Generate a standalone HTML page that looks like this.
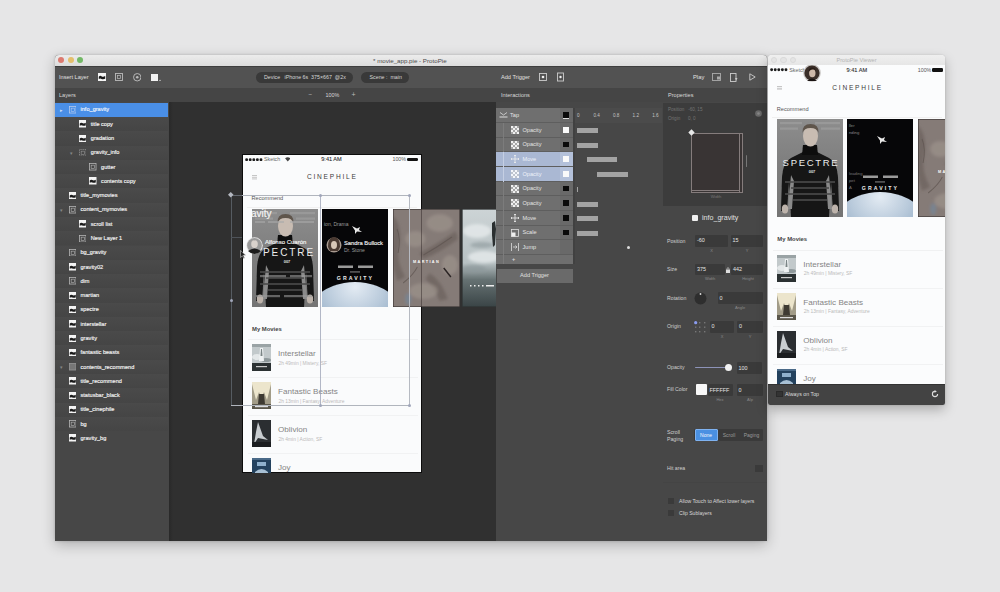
<!DOCTYPE html><html><head><meta charset="utf-8"><style>
*{margin:0;padding:0;box-sizing:border-box}
html,body{width:1000px;height:592px;overflow:hidden;background:#e6e6e7;font-family:"Liberation Sans",sans-serif;position:relative}
.a{position:absolute}
.t{position:absolute;white-space:nowrap}
svg{position:absolute;overflow:hidden}
</style></head><body>
<div class="a" style="left:55px;top:55px;width:712px;height:486px;background:#474747;box-shadow:0 4px 14px rgba(0,0,0,.24),0 0 3px rgba(0,0,0,.18);border-radius:4px 4px 2px 2px"></div>
<div class="a" style="left:55px;top:55px;width:712px;height:11px;background:linear-gradient(#ececec,#dcdcdc);border-radius:4px 4px 0 0"></div>
<div class="a" style="left:58.2px;top:57.4px;width:6px;height:6px;border-radius:50%;background:#dc7a70"></div>
<div class="a" style="left:67.7px;top:57.4px;width:6px;height:6px;border-radius:50%;background:#e4bf6c"></div>
<div class="a" style="left:77.2px;top:57.4px;width:6px;height:6px;border-radius:50%;background:#72b866"></div>
<div class="t" style="left:373px;top:57.28px;font-size:6.2px;line-height:7.44px;color:#4a4a4a;">* movie_app.pie - ProtoPie</div>
<div class="a" style="left:55px;top:66px;width:712px;height:22px;background:#525252"></div>
<div class="a" style="left:55px;top:66px;width:712px;height:1px;background:#3e3e3e"></div>
<div class="a" style="left:55px;top:88px;width:712px;height:14px;background:#454545"></div>
<div class="a" style="left:55px;top:102px;width:114px;height:439px;background:#474747"></div>
<div class="a" style="left:55px;top:102.7px;width:113px;height:14.28px;background:#4a8fe7"></div>
<div class="t" style="left:60.0px;top:106.84px;font-size:5px;line-height:6px;color:#cfe0f8">&#9656;</div>
<svg style="left:68.5px;top:106.04px" width="7.5" height="7.5" viewBox="0 0 8 8"><rect x="0.5" y="0.5" width="7" height="7" fill="none" stroke="#b9cdf0" stroke-width="0.8"/><rect x="2.3" y="2.3" width="3.4" height="3.4" fill="none" stroke="#b9cdf0" stroke-width="0.6"/></svg>
<div class="t" style="left:80.5px;top:106.48px;font-size:5.6px;line-height:6.72px;color:#eef3fb;-webkit-text-stroke:0.16px #eef3fb;">info_gravity</div>
<div class="a" style="left:55px;top:116.98px;width:113px;height:14.28px;background:linear-gradient(#4a4a4a,#454545)"></div>
<svg style="left:78.8px;top:120.32000000000001px" width="7.5" height="7.5" viewBox="0 0 8 8"><rect x="0" y="0" width="8" height="8" fill="#f4f4f4"/><path d="M0.8 3.8 Q2 2.2 3.5 3.2 Q5 4.3 7.2 3 L7.2 5.8 Q5 6.6 3.5 5.9 Q2 5.2 0.8 6.1Z" fill="#1a1a1a"/></svg>
<div class="t" style="left:90.8px;top:120.76px;font-size:5.6px;line-height:6.72px;color:#f2f2f2;-webkit-text-stroke:0.16px #f2f2f2;">title copy</div>
<div class="a" style="left:55px;top:131.26px;width:113px;height:14.28px;background:linear-gradient(#4a4a4a,#454545)"></div>
<svg style="left:78.8px;top:134.59999999999997px" width="7.5" height="7.5" viewBox="0 0 8 8"><rect x="0" y="0" width="8" height="8" fill="#f4f4f4"/><path d="M0.8 3.8 Q2 2.2 3.5 3.2 Q5 4.3 7.2 3 L7.2 5.8 Q5 6.6 3.5 5.9 Q2 5.2 0.8 6.1Z" fill="#1a1a1a"/></svg>
<div class="t" style="left:90.8px;top:135.04px;font-size:5.6px;line-height:6.72px;color:#f2f2f2;-webkit-text-stroke:0.16px #f2f2f2;">gradation</div>
<div class="a" style="left:55px;top:145.54px;width:113px;height:14.28px;background:linear-gradient(#4a4a4a,#454545)"></div>
<div class="t" style="left:70.3px;top:149.67999999999998px;font-size:5px;line-height:6px;color:#888">&#9662;</div>
<svg style="left:78.8px;top:148.87999999999997px" width="7.5" height="7.5" viewBox="0 0 8 8"><rect x="0.5" y="0.5" width="7" height="7" fill="none" stroke="#999" stroke-width="0.8" stroke-dasharray="1.2 0.8"/><rect x="2.3" y="2.3" width="3.4" height="3.4" fill="none" stroke="#999" stroke-width="0.6"/></svg>
<div class="t" style="left:90.8px;top:149.32px;font-size:5.6px;line-height:6.72px;color:#f2f2f2;-webkit-text-stroke:0.16px #f2f2f2;">gravity_info</div>
<div class="a" style="left:55px;top:159.82px;width:113px;height:14.28px;background:linear-gradient(#4a4a4a,#454545)"></div>
<svg style="left:89.1px;top:163.15999999999997px" width="7.5" height="7.5" viewBox="0 0 8 8"><rect x="0.5" y="0.5" width="7" height="7" fill="none" stroke="#bbb" stroke-width="0.8"/><rect x="2.3" y="2.3" width="3.4" height="3.4" fill="none" stroke="#bbb" stroke-width="0.6"/></svg>
<div class="t" style="left:101.1px;top:163.60px;font-size:5.6px;line-height:6.72px;color:#f2f2f2;-webkit-text-stroke:0.16px #f2f2f2;">gutter</div>
<div class="a" style="left:55px;top:174.1px;width:113px;height:14.28px;background:linear-gradient(#4a4a4a,#454545)"></div>
<svg style="left:89.1px;top:177.43999999999997px" width="7.5" height="7.5" viewBox="0 0 8 8"><rect x="0" y="0" width="8" height="8" fill="#f4f4f4"/><path d="M0.8 3.8 Q2 2.2 3.5 3.2 Q5 4.3 7.2 3 L7.2 5.8 Q5 6.6 3.5 5.9 Q2 5.2 0.8 6.1Z" fill="#1a1a1a"/></svg>
<div class="t" style="left:101.1px;top:177.88px;font-size:5.6px;line-height:6.72px;color:#f2f2f2;-webkit-text-stroke:0.16px #f2f2f2;">contents copy</div>
<div class="a" style="left:55px;top:188.38px;width:113px;height:14.28px;background:linear-gradient(#4a4a4a,#454545)"></div>
<svg style="left:68.5px;top:191.71999999999997px" width="7.5" height="7.5" viewBox="0 0 8 8"><rect x="0" y="0" width="8" height="8" fill="#f4f4f4"/><path d="M0.8 3.8 Q2 2.2 3.5 3.2 Q5 4.3 7.2 3 L7.2 5.8 Q5 6.6 3.5 5.9 Q2 5.2 0.8 6.1Z" fill="#1a1a1a"/></svg>
<div class="t" style="left:80.5px;top:192.16px;font-size:5.6px;line-height:6.72px;color:#f2f2f2;-webkit-text-stroke:0.16px #f2f2f2;">title_mymovies</div>
<div class="a" style="left:55px;top:202.66px;width:113px;height:14.28px;background:linear-gradient(#4a4a4a,#454545)"></div>
<div class="t" style="left:60.0px;top:206.79999999999998px;font-size:5px;line-height:6px;color:#888">&#9662;</div>
<svg style="left:68.5px;top:205.99999999999997px" width="7.5" height="7.5" viewBox="0 0 8 8"><rect x="0.5" y="0.5" width="7" height="7" fill="none" stroke="#bbb" stroke-width="0.8"/><rect x="2.3" y="2.3" width="3.4" height="3.4" fill="none" stroke="#bbb" stroke-width="0.6"/></svg>
<div class="t" style="left:80.5px;top:206.44px;font-size:5.6px;line-height:6.72px;color:#f2f2f2;-webkit-text-stroke:0.16px #f2f2f2;">content_mymovies</div>
<div class="a" style="left:55px;top:216.94px;width:113px;height:14.28px;background:linear-gradient(#4a4a4a,#454545)"></div>
<svg style="left:78.8px;top:220.27999999999997px" width="7.5" height="7.5" viewBox="0 0 8 8"><rect x="0" y="0" width="8" height="8" fill="#f4f4f4"/><path d="M0.8 3.8 Q2 2.2 3.5 3.2 Q5 4.3 7.2 3 L7.2 5.8 Q5 6.6 3.5 5.9 Q2 5.2 0.8 6.1Z" fill="#1a1a1a"/></svg>
<div class="t" style="left:90.8px;top:220.72px;font-size:5.6px;line-height:6.72px;color:#f2f2f2;-webkit-text-stroke:0.16px #f2f2f2;">scroll list</div>
<div class="a" style="left:55px;top:231.21999999999997px;width:113px;height:14.28px;background:linear-gradient(#4a4a4a,#454545)"></div>
<svg style="left:78.8px;top:234.55999999999995px" width="7.5" height="7.5" viewBox="0 0 8 8"><rect x="0.5" y="0.5" width="7" height="7" fill="none" stroke="#bbb" stroke-width="0.8"/><rect x="2.3" y="2.3" width="3.4" height="3.4" fill="none" stroke="#bbb" stroke-width="0.6"/></svg>
<div class="t" style="left:90.8px;top:235.00px;font-size:5.6px;line-height:6.72px;color:#f2f2f2;-webkit-text-stroke:0.16px #f2f2f2;">New Layer 1</div>
<div class="a" style="left:55px;top:245.5px;width:113px;height:14.28px;background:linear-gradient(#4a4a4a,#454545)"></div>
<svg style="left:68.5px;top:248.83999999999997px" width="7.5" height="7.5" viewBox="0 0 8 8"><rect x="0.5" y="0.5" width="7" height="7" fill="none" stroke="#bbb" stroke-width="0.8"/><rect x="2.3" y="2.3" width="3.4" height="3.4" fill="none" stroke="#bbb" stroke-width="0.6"/></svg>
<div class="t" style="left:80.5px;top:249.28px;font-size:5.6px;line-height:6.72px;color:#f2f2f2;-webkit-text-stroke:0.16px #f2f2f2;">bg_gravity</div>
<div class="a" style="left:55px;top:259.78px;width:113px;height:14.28px;background:linear-gradient(#4a4a4a,#454545)"></div>
<svg style="left:68.5px;top:263.11999999999995px" width="7.5" height="7.5" viewBox="0 0 8 8"><rect x="0" y="0" width="8" height="8" fill="#f4f4f4"/><path d="M0.8 3.8 Q2 2.2 3.5 3.2 Q5 4.3 7.2 3 L7.2 5.8 Q5 6.6 3.5 5.9 Q2 5.2 0.8 6.1Z" fill="#1a1a1a"/></svg>
<div class="t" style="left:80.5px;top:263.56px;font-size:5.6px;line-height:6.72px;color:#f2f2f2;-webkit-text-stroke:0.16px #f2f2f2;">gravity02</div>
<div class="a" style="left:55px;top:274.06px;width:113px;height:14.28px;background:linear-gradient(#4a4a4a,#454545)"></div>
<svg style="left:68.5px;top:277.4px" width="7.5" height="7.5" viewBox="0 0 8 8"><rect x="0.5" y="0.5" width="7" height="7" fill="none" stroke="#bbb" stroke-width="0.8"/><rect x="2.3" y="2.3" width="3.4" height="3.4" fill="none" stroke="#bbb" stroke-width="0.6"/></svg>
<div class="t" style="left:80.5px;top:277.84px;font-size:5.6px;line-height:6.72px;color:#f2f2f2;-webkit-text-stroke:0.16px #f2f2f2;">dim</div>
<div class="a" style="left:55px;top:288.34px;width:113px;height:14.28px;background:linear-gradient(#4a4a4a,#454545)"></div>
<svg style="left:68.5px;top:291.67999999999995px" width="7.5" height="7.5" viewBox="0 0 8 8"><rect x="0" y="0" width="8" height="8" fill="#f4f4f4"/><path d="M0.8 3.8 Q2 2.2 3.5 3.2 Q5 4.3 7.2 3 L7.2 5.8 Q5 6.6 3.5 5.9 Q2 5.2 0.8 6.1Z" fill="#1a1a1a"/></svg>
<div class="t" style="left:80.5px;top:292.12px;font-size:5.6px;line-height:6.72px;color:#f2f2f2;-webkit-text-stroke:0.16px #f2f2f2;">martian</div>
<div class="a" style="left:55px;top:302.62px;width:113px;height:14.28px;background:linear-gradient(#4a4a4a,#454545)"></div>
<svg style="left:68.5px;top:305.96px" width="7.5" height="7.5" viewBox="0 0 8 8"><rect x="0" y="0" width="8" height="8" fill="#f4f4f4"/><path d="M0.8 3.8 Q2 2.2 3.5 3.2 Q5 4.3 7.2 3 L7.2 5.8 Q5 6.6 3.5 5.9 Q2 5.2 0.8 6.1Z" fill="#1a1a1a"/></svg>
<div class="t" style="left:80.5px;top:306.40px;font-size:5.6px;line-height:6.72px;color:#f2f2f2;-webkit-text-stroke:0.16px #f2f2f2;">spectre</div>
<div class="a" style="left:55px;top:316.9px;width:113px;height:14.28px;background:linear-gradient(#4a4a4a,#454545)"></div>
<svg style="left:68.5px;top:320.23999999999995px" width="7.5" height="7.5" viewBox="0 0 8 8"><rect x="0" y="0" width="8" height="8" fill="#f4f4f4"/><path d="M0.8 3.8 Q2 2.2 3.5 3.2 Q5 4.3 7.2 3 L7.2 5.8 Q5 6.6 3.5 5.9 Q2 5.2 0.8 6.1Z" fill="#1a1a1a"/></svg>
<div class="t" style="left:80.5px;top:320.68px;font-size:5.6px;line-height:6.72px;color:#f2f2f2;-webkit-text-stroke:0.16px #f2f2f2;">interstellar</div>
<div class="a" style="left:55px;top:331.18px;width:113px;height:14.28px;background:linear-gradient(#4a4a4a,#454545)"></div>
<svg style="left:68.5px;top:334.52px" width="7.5" height="7.5" viewBox="0 0 8 8"><rect x="0" y="0" width="8" height="8" fill="#f4f4f4"/><path d="M0.8 3.8 Q2 2.2 3.5 3.2 Q5 4.3 7.2 3 L7.2 5.8 Q5 6.6 3.5 5.9 Q2 5.2 0.8 6.1Z" fill="#1a1a1a"/></svg>
<div class="t" style="left:80.5px;top:334.96px;font-size:5.6px;line-height:6.72px;color:#f2f2f2;-webkit-text-stroke:0.16px #f2f2f2;">gravity</div>
<div class="a" style="left:55px;top:345.46px;width:113px;height:14.28px;background:linear-gradient(#4a4a4a,#454545)"></div>
<svg style="left:68.5px;top:348.79999999999995px" width="7.5" height="7.5" viewBox="0 0 8 8"><rect x="0" y="0" width="8" height="8" fill="#f4f4f4"/><path d="M0.8 3.8 Q2 2.2 3.5 3.2 Q5 4.3 7.2 3 L7.2 5.8 Q5 6.6 3.5 5.9 Q2 5.2 0.8 6.1Z" fill="#1a1a1a"/></svg>
<div class="t" style="left:80.5px;top:349.24px;font-size:5.6px;line-height:6.72px;color:#f2f2f2;-webkit-text-stroke:0.16px #f2f2f2;">fantastic beasts</div>
<div class="a" style="left:55px;top:359.73999999999995px;width:113px;height:14.28px;background:linear-gradient(#4a4a4a,#454545)"></div>
<div class="t" style="left:60.0px;top:363.87999999999994px;font-size:5px;line-height:6px;color:#888">&#9662;</div>
<svg style="left:68.5px;top:363.0799999999999px" width="7.5" height="7.5" viewBox="0 0 8 8"><rect x="0.5" y="0.5" width="7" height="7" fill="#777" stroke="#999" stroke-width="0.8"/></svg>
<div class="t" style="left:80.5px;top:363.52px;font-size:5.6px;line-height:6.72px;color:#f2f2f2;-webkit-text-stroke:0.16px #f2f2f2;">contents_recommend</div>
<div class="a" style="left:55px;top:374.02px;width:113px;height:14.28px;background:linear-gradient(#4a4a4a,#454545)"></div>
<svg style="left:68.5px;top:377.35999999999996px" width="7.5" height="7.5" viewBox="0 0 8 8"><rect x="0" y="0" width="8" height="8" fill="#f4f4f4"/><path d="M0.8 3.8 Q2 2.2 3.5 3.2 Q5 4.3 7.2 3 L7.2 5.8 Q5 6.6 3.5 5.9 Q2 5.2 0.8 6.1Z" fill="#1a1a1a"/></svg>
<div class="t" style="left:80.5px;top:377.80px;font-size:5.6px;line-height:6.72px;color:#f2f2f2;-webkit-text-stroke:0.16px #f2f2f2;">title_recommend</div>
<div class="a" style="left:55px;top:388.29999999999995px;width:113px;height:14.28px;background:linear-gradient(#4a4a4a,#454545)"></div>
<svg style="left:68.5px;top:391.63999999999993px" width="7.5" height="7.5" viewBox="0 0 8 8"><rect x="0" y="0" width="8" height="8" fill="#f4f4f4"/><path d="M0.8 3.8 Q2 2.2 3.5 3.2 Q5 4.3 7.2 3 L7.2 5.8 Q5 6.6 3.5 5.9 Q2 5.2 0.8 6.1Z" fill="#1a1a1a"/></svg>
<div class="t" style="left:80.5px;top:392.08px;font-size:5.6px;line-height:6.72px;color:#f2f2f2;-webkit-text-stroke:0.16px #f2f2f2;">statusbar_black</div>
<div class="a" style="left:55px;top:402.58px;width:113px;height:14.28px;background:linear-gradient(#4a4a4a,#454545)"></div>
<svg style="left:68.5px;top:405.91999999999996px" width="7.5" height="7.5" viewBox="0 0 8 8"><rect x="0" y="0" width="8" height="8" fill="#f4f4f4"/><path d="M0.8 3.8 Q2 2.2 3.5 3.2 Q5 4.3 7.2 3 L7.2 5.8 Q5 6.6 3.5 5.9 Q2 5.2 0.8 6.1Z" fill="#1a1a1a"/></svg>
<div class="t" style="left:80.5px;top:406.36px;font-size:5.6px;line-height:6.72px;color:#f2f2f2;-webkit-text-stroke:0.16px #f2f2f2;">title_cinephile</div>
<div class="a" style="left:55px;top:416.85999999999996px;width:113px;height:14.28px;background:linear-gradient(#4a4a4a,#454545)"></div>
<svg style="left:68.5px;top:420.19999999999993px" width="7.5" height="7.5" viewBox="0 0 8 8"><rect x="0.5" y="0.5" width="7" height="7" fill="none" stroke="#bbb" stroke-width="0.8"/><rect x="2.3" y="2.3" width="3.4" height="3.4" fill="none" stroke="#bbb" stroke-width="0.6"/></svg>
<div class="t" style="left:80.5px;top:420.64px;font-size:5.6px;line-height:6.72px;color:#f2f2f2;-webkit-text-stroke:0.16px #f2f2f2;">bg</div>
<svg style="left:68.5px;top:434.47999999999996px" width="7.5" height="7.5" viewBox="0 0 8 8"><rect x="0" y="0" width="8" height="8" fill="#f4f4f4"/><path d="M0.8 3.8 Q2 2.2 3.5 3.2 Q5 4.3 7.2 3 L7.2 5.8 Q5 6.6 3.5 5.9 Q2 5.2 0.8 6.1Z" fill="#1a1a1a"/></svg>
<div class="t" style="left:80.5px;top:434.92px;font-size:5.6px;line-height:6.72px;color:#f2f2f2;-webkit-text-stroke:0.16px #f2f2f2;">gravity_bg</div>
<div class="t" style="left:59px;top:73.84px;font-size:5.6px;line-height:6.72px;color:#e0e0e0;">Insert Layer</div>
<svg style="left:97.5px;top:73.3px" width="8" height="8" viewBox="0 0 8 8"><rect x="0" y="0" width="8" height="8" fill="#f4f4f4"/><path d="M0.8 3.8 Q2 2.2 3.5 3.2 Q5 4.3 7.2 3 L7.2 5.8 Q5 6.6 3.5 5.9 Q2 5.2 0.8 6.1Z" fill="#1a1a1a"/></svg>
<svg style="left:115px;top:73.3px" width="8" height="8" viewBox="0 0 8 8"><rect x="0.5" y="0.5" width="7" height="7" fill="none" stroke="#bbb" stroke-width="0.9"/><rect x="2.4" y="2.4" width="3.2" height="3.2" fill="none" stroke="#bbb" stroke-width="0.7"/></svg>
<svg style="left:132.5px;top:73.3px" width="8.5" height="8.5" viewBox="0 0 8 8"><circle cx="4" cy="4" r="3.5" fill="none" stroke="#bbb" stroke-width="0.9"/><circle cx="4" cy="4" r="1.2" fill="#bbb"/></svg>
<svg style="left:151px;top:73.5px" width="10" height="8" viewBox="0 0 10 8"><rect x="0" y="0" width="7" height="7" fill="#f2f2f2"/><path d="M8 7 L10 7 L9 5.5Z" fill="#ccc"/></svg>
<div class="a" style="left:256px;top:71.5px;width:97px;height:11px;background:#393939;border-radius:6px"></div>
<div class="t" style="left:264px;top:73.82px;font-size:5.3px;line-height:6.36px;color:#d8d8d8;">Device&nbsp;&nbsp;&nbsp;iPhone 6s&nbsp;&nbsp;375&times;667&nbsp;&nbsp;@2x</div>
<div class="a" style="left:361px;top:71.5px;width:48px;height:11px;background:#393939;border-radius:6px"></div>
<div class="t" style="left:369.5px;top:73.82px;font-size:5.3px;line-height:6.36px;color:#d8d8d8;">Scene&nbsp;:&nbsp;&nbsp;main</div>
<div class="t" style="left:501px;top:73.84px;font-size:5.6px;line-height:6.72px;color:#e0e0e0;">Add Trigger</div>
<svg style="left:539px;top:73px" width="8" height="8" viewBox="0 0 8 8"><rect x="0.5" y="0.5" width="7" height="7" fill="none" stroke="#ccc" stroke-width="0.9"/><circle cx="4" cy="4" r="1.3" fill="#eee"/></svg>
<svg style="left:557px;top:72px" width="7" height="10" viewBox="0 0 7 10"><rect x="0.5" y="1" width="6" height="8" fill="none" stroke="#ccc" stroke-width="0.9"/><circle cx="3.5" cy="5" r="1.2" fill="#eee"/></svg>
<div class="t" style="left:693px;top:73.92px;font-size:5.8px;line-height:6.96px;color:#e0e0e0;">Play</div>
<svg style="left:712px;top:73px" width="9" height="8" viewBox="0 0 9 8"><rect x="0.5" y="0.5" width="8" height="7" fill="none" stroke="#aaa" stroke-width="0.9"/><rect x="5" y="3.5" width="3" height="3" fill="#aaa"/></svg>
<svg style="left:730px;top:72.5px" width="8" height="9" viewBox="0 0 8 9"><rect x="0.5" y="0.5" width="5.5" height="8" fill="none" stroke="#ccc" stroke-width="0.9"/><path d="M5 5 L7.5 5 L6.2 7.5Z" fill="#ccc"/></svg>
<svg style="left:749px;top:73px" width="7" height="8" viewBox="0 0 7 8"><path d="M0.8 0.8 L6.2 4 L0.8 7.2Z" fill="none" stroke="#ccc" stroke-width="0.9"/></svg>
<div class="t" style="left:59px;top:91.64px;font-size:5.6px;line-height:6.72px;color:#d8d8d8;">Layers</div>
<div class="t" style="left:310.5px;top:90.90px;font-size:6.5px;line-height:7.80px;color:#bbb;transform:translateX(-50%);">&minus;</div>
<div class="t" style="left:332.5px;top:91.76px;font-size:5.4px;line-height:6.48px;color:#d8d8d8;transform:translateX(-50%);">100%</div>
<div class="t" style="left:353.5px;top:90.60px;font-size:7px;line-height:8.40px;color:#bbb;transform:translateX(-50%);">+</div>
<div class="t" style="left:501px;top:91.64px;font-size:5.6px;line-height:6.72px;color:#d8d8d8;">Interactions</div>
<div class="t" style="left:668px;top:91.64px;font-size:5.6px;line-height:6.72px;color:#d8d8d8;">Properties</div>
<div class="a" style="left:169px;top:102px;width:327px;height:439px;background:#303030"></div>
<div class="a" style="left:169px;top:102px;width:4px;height:439px;background:linear-gradient(90deg,#292929,#303030)"></div>
<div class="a" style="left:242px;top:154px;width:180px;height:319px;overflow:hidden">
<div class="a" style="left:-242px;top:-154px;width:1000px;height:592px">
<div class="a" style="left:242px;top:154px;width:180px;height:319px;background:#fafbfc;border:1px solid #0c0c0c"></div>
<svg style="left:245px;top:157.6px" width="18" height="3.4" viewBox="0 0 18 3.4"><g fill="#1a1a1a"><circle cx="1.6" cy="1.7" r="1.45"/><circle cx="5.2" cy="1.7" r="1.45"/><circle cx="8.8" cy="1.7" r="1.45"/><circle cx="12.4" cy="1.7" r="1.45"/><circle cx="16" cy="1.7" r="1.45"/></g></svg>
<div class="t" style="left:264px;top:156.12px;font-size:5.3px;line-height:6.36px;color:#666;">Sketch</div>
<svg style="left:284.5px;top:157px" width="5.5" height="4.5" viewBox="0 0 6 5"><path d="M0 1.5 Q3 -0.8 6 1.5 L3 5Z" fill="#444"/></svg>
<div class="t" style="left:331.5px;top:155.94px;font-size:5.6px;line-height:6.72px;color:#333;-webkit-text-stroke:0.12px #333;transform:translateX(-50%);">9:41 AM</div>
<div class="t" style="left:406px;top:156.12px;font-size:5.3px;line-height:6.36px;color:#555;transform:translateX(-100%);">100%</div>
<div class="a" style="left:407px;top:157.6px;width:11px;height:3.6px;background:#111;border-radius:1.2px"></div>
<svg style="left:252px;top:175px" width="5" height="4.5" viewBox="0 0 6 5"><g fill="#bbb"><rect y="0" width="6" height="1"/><rect y="2" width="6" height="1"/><rect y="4" width="6" height="1"/></g></svg>
<div class="t" style="left:332.3px;top:173.44px;font-size:6.6px;line-height:7.92px;color:#3a3a3a;transform:translateX(-50%);letter-spacing:1.75px">CINEPHILE</div>
<div class="t" style="left:251.5px;top:195.24px;font-size:5.6px;line-height:6.72px;color:#555;">Recommend</div>
<div class="a" style="left:247px;top:206.5px;width:170px;height:0.5px;background:#f0f0f0"></div>
<svg style="left:252px;top:208.5px" width="66" height="98" viewBox="0 0 66 98" preserveAspectRatio="none"><defs><linearGradient id="spbg" x1="0" y1="0" x2="0" y2="1"><stop offset="0" stop-color="#8d8d8d"/><stop offset="0.5" stop-color="#7d7d7d"/><stop offset="1" stop-color="#747474"/></linearGradient><filter id="sb" x="-5%" y="-5%" width="110%" height="110%"><feGaussianBlur stdDeviation="0.45"/></filter></defs><rect width="66" height="98" fill="url(#spbg)"/><g filter="url(#sb)"><g fill="#a5a5a5" opacity="0.55"><rect x="3" y="3" width="22" height="2.2"/><rect x="38" y="3" width="25" height="2.2"/><rect x="3" y="8.5" width="18" height="2.2"/><rect x="44" y="8.5" width="19" height="2.2"/></g><path d="M4 92 L5 58 Q6 43 14 39 L26 33 L40 33 L52 39 Q60 43 61 58 L62 92 L56 92 L54 62 L52 98 L14 98 L12 62 L10 92Z" fill="#141414"/><path d="M14 56 L11 90 L15 90 L17 62Z M52 56 L55 90 L51 90 L49 62Z" fill="#8a8a8a"/><ellipse cx="8" cy="90" rx="3.2" ry="4.5" fill="#bdb3ab"/><ellipse cx="58" cy="90" rx="3.2" ry="4.5" fill="#bdb3ab"/><path d="M26 26 L40 26 L41 36 L25 36Z" fill="#111"/><ellipse cx="33.5" cy="17" rx="7.5" ry="10.5" fill="#c8bcb2"/><path d="M25.5 14 Q25 5 33.5 5 Q42 5 41.5 14 Q40 9 33.5 9 Q27 9 25.5 14Z" fill="#5e544c"/><g fill="#4a4a4a" opacity="0.8"><rect x="8" y="62" width="50" height="2"/><rect x="14" y="68" width="38" height="2"/><rect x="8" y="74" width="50" height="2"/><rect x="16" y="80" width="34" height="2"/></g></g><text x="-1" y="8" font-family="Liberation Sans" font-size="10" fill="#f4f4f4" stroke="#f4f4f4" stroke-width="0.2">avity</text><g fill="#aaa" opacity="0.6"><rect x="3" y="12" width="10" height="2"/><rect x="16" y="12" width="16" height="2"/><rect x="38" y="12" width="24" height="2"/></g><text x="13" y="35" font-family="Liberation Sans" font-size="6" fill="#f4f4f4" stroke="#f4f4f4" stroke-width="0.15">Alfonso Cuarón</text><text x="11" y="47" font-family="Liberation Sans" font-size="10" letter-spacing="1.9" fill="#ededed">PECTRE</text><text x="35" y="54" text-anchor="middle" font-family="Liberation Sans" font-size="4" fill="#e0e0e0" font-weight="bold">007</text><g fill="#999" opacity="0.6"><rect x="8" y="66" width="26" height="2.2"/><rect x="38" y="66" width="22" height="2.2"/><rect x="4" y="86" width="24" height="2.2"/><rect x="32" y="86" width="28" height="2.2"/></g></svg>
<svg style="left:322px;top:208.5px" width="66" height="98" viewBox="0 0 66 98" preserveAspectRatio="none"><defs><radialGradient id="earth" cx="0.5" cy="0.05" r="0.75"><stop offset="0" stop-color="#e3ebf3"/><stop offset="0.35" stop-color="#b9cadb"/><stop offset="0.8" stop-color="#7b98b6"/><stop offset="1" stop-color="#506c8a"/></radialGradient><filter id="gb" x="-5%" y="-5%" width="110%" height="110%"><feGaussianBlur stdDeviation="0.5"/></filter></defs><rect width="66" height="98" fill="#060608"/><ellipse cx="33" cy="123" rx="56" ry="50" fill="url(#earth)" filter="url(#gb)"/><path d="M30 17 L35 19.5 L38 18 L37 21 L40 23 L35 22.5 L33 25 L33 21.5Z" fill="#e8e8e8"/><text x="33.5" y="70.5" text-anchor="middle" font-family="Liberation Sans" font-size="5.2" letter-spacing="2.1" fill="#eeeeee" font-weight="bold">GRAVITY</text><g fill="#9a9a9a"><rect x="16" y="56.5" width="15" height="2.5"/><rect x="36" y="56.5" width="15" height="2.5"/><rect x="28" y="62.5" width="10" height="0.9"/></g><text x="2" y="17" font-family="Liberation Sans" font-size="5" fill="#9a9a9a">ion, Drama</text><circle cx="12" cy="36" r="7.5" fill="#a89a90"/><path d="M6 38 Q6 28 12 28 Q18 28 18 38 L16 42 L8 42Z" fill="#4a3a32"/><ellipse cx="12" cy="36" rx="3" ry="4" fill="#d8c8b8"/><text x="22" y="35.5" font-family="Liberation Sans" font-size="5.8" fill="#f0f0f0" stroke="#f0f0f0" stroke-width="0.15">Sandra Bullock</text><text x="22" y="42.5" font-family="Liberation Sans" font-size="5" fill="#999">Dr. Stone</text></svg>
<svg style="left:393px;top:208.5px" width="67" height="98" viewBox="0 0 66 98" preserveAspectRatio="none"><defs><filter id="mb" x="-10%" y="-10%" width="120%" height="120%"><feGaussianBlur stdDeviation="1.6"/></filter><filter id="mb2" x="-10%" y="-10%" width="120%" height="120%"><feGaussianBlur stdDeviation="0.7"/></filter></defs><rect width="66" height="98" fill="#857b77"/><g filter="url(#mb)"><g fill="#6c615d" opacity="0.7"><path d="M0 6 Q10 18 6 38 Q3 52 12 68 L4 72 Q-4 50 0 28Z"/><path d="M26 44 Q42 36 62 22 L64 30 Q46 44 30 50Z"/><path d="M36 64 Q48 72 54 90 L46 92 Q40 78 32 70Z"/></g><g fill="#a0968f" opacity="0.6"><ellipse cx="46" cy="14" rx="13" ry="9"/><ellipse cx="22" cy="30" rx="10" ry="8"/><ellipse cx="30" cy="82" rx="14" ry="8"/><ellipse cx="56" cy="56" rx="8" ry="10"/></g><ellipse cx="15" cy="90" rx="3" ry="6" fill="#74869a" opacity="0.7"/></g><g filter="url(#mb2)" stroke="#5e5450" stroke-width="1" fill="none" opacity="0.7"><path d="M4 20 Q8 30 5 44"/><path d="M30 46 Q44 38 58 28"/><path d="M10 74 Q20 66 24 58"/></g><text x="33" y="54.5" text-anchor="middle" font-family="Liberation Sans" font-size="3.8" letter-spacing="1.3" fill="#fafafa" font-weight="bold">MARTIAN</text><path d="M50 59 L57 68" stroke="#2a2424" stroke-width="1.4"/><rect x="0.3" y="0.3" width="65.4" height="97.4" fill="none" stroke="#3a3434" stroke-width="0.6"/></svg>
<div class="a" style="left:421px;top:208.5px;width:0.8px;height:98px;background:rgba(60,50,50,.35)"></div>
<svg style="left:462px;top:208.5px" width="66" height="98" viewBox="0 0 66 98" preserveAspectRatio="none"><defs><linearGradient id="ibg" x1="0" y1="0" x2="0" y2="1"><stop offset="0" stop-color="#cdd4d6"/><stop offset="0.55" stop-color="#b7c1c3"/><stop offset="0.72" stop-color="#667273"/><stop offset="1" stop-color="#3a4446"/></linearGradient><filter id="ib" x="-10%" y="-10%" width="120%" height="120%"><feGaussianBlur stdDeviation="1.5"/></filter></defs><rect width="66" height="98" fill="url(#ibg)"/><g filter="url(#ib)"><g fill="#e4e9ea" opacity="0.85"><ellipse cx="15" cy="22" rx="14" ry="7"/><ellipse cx="22" cy="48" rx="16" ry="6"/></g><g fill="#8d989b" opacity="0.6"><ellipse cx="20" cy="36" rx="12" ry="3"/><ellipse cx="12" cy="60" rx="12" ry="4"/></g></g><path d="M30 14 L33 12 L34 20 L33 36 L31 38 L30 26Z" fill="#2a2f30"/><g fill="#eee"><rect x="8" y="76" width="1.5" height="1.5"/><rect x="12" y="76" width="1.5" height="1.5"/><rect x="16" y="76" width="1.5" height="1.5"/><rect x="20" y="76" width="1.5" height="1.5"/><rect x="24" y="76" width="8" height="1.5"/></g><rect x="0.3" y="0.3" width="65.4" height="97.4" fill="none" stroke="#2e3434" stroke-width="0.7"/></svg>
<svg style="left:246px;top:236px" width="17" height="19" viewBox="0 0 17 19"><circle cx="8.5" cy="9.5" r="8.3" fill="#e8e8e8"/><circle cx="8.5" cy="9.5" r="7.4" fill="#9a9a9a"/><path d="M2 15 Q8.5 10 15 15 Q12 18 8.5 18 Q5 18 2 15Z" fill="#1c1c1c"/><ellipse cx="8.5" cy="8" rx="3.3" ry="4" fill="#d9d2cc"/><path d="M5 6 Q8.5 2.5 12 6 Q10 4.6 8.5 4.6 Q7 4.6 5 6Z" fill="#7a7a7a"/></svg>
<div class="t" style="left:252px;top:325.76px;font-size:5.9px;line-height:7.08px;color:#444;font-weight:bold">My Movies</div>
<div class="a" style="left:248px;top:339px;width:170px;height:0.5px;background:#f0f1f2"></div>
<svg style="left:252px;top:344.3px" width="19" height="27" viewBox="0 0 19 27" preserveAspectRatio="none"><rect width="19" height="27" fill="#c2c9cb"/><rect y="0" width="19" height="3" fill="#9aa3a5"/><ellipse cx="5" cy="13" rx="5" ry="3" fill="#e4e8e9"/><ellipse cx="14" cy="16" rx="5" ry="2" fill="#8f999b"/><rect y="19" width="19" height="8" fill="#2b3132"/><path d="M8 4 L11 4 L12 17 L7 17Z" fill="#eef1f2"/><path d="M9 5 L10 5 L10.5 12 L8.5 12Z" fill="#7a8485"/><rect x="4" y="22" width="11" height="1.2" fill="#ccc"/></svg>
<div class="t" style="left:278px;top:349.24px;font-size:8.1px;line-height:9.72px;color:#858585;">Interstellar</div>
<div class="t" style="left:278.5px;top:360.56px;font-size:4.9px;line-height:5.88px;color:#bababa;">2h 49min | Mistery, SF</div>
<div class="a" style="left:248px;top:377.0px;width:170px;height:0.5px;background:#f1f2f3"></div>
<svg style="left:252px;top:382.3px" width="19" height="27" viewBox="0 0 19 27" preserveAspectRatio="none"><rect width="19" height="27" fill="#ece5cc"/><path d="M0 2 L4 18 L7 10 L9.5 16 L12 10 L15 18 L19 2 L19 27 L0 27Z" fill="#a29c88"/><path d="M7 12 L12 12 L13 22 L6 22Z" fill="#3e3a32"/><rect y="22" width="19" height="5" fill="#5a564a"/><rect x="3" y="24" width="13" height="1.2" fill="#ddd"/></svg>
<div class="t" style="left:278px;top:387.24px;font-size:8.1px;line-height:9.72px;color:#858585;">Fantastic Beasts</div>
<div class="t" style="left:278.5px;top:398.56px;font-size:4.9px;line-height:5.88px;color:#bababa;">2h 13min | Fantasy, Adventure</div>
<div class="a" style="left:248px;top:415.0px;width:170px;height:0.5px;background:#f1f2f3"></div>
<svg style="left:252px;top:420.3px" width="19" height="27" viewBox="0 0 19 27" preserveAspectRatio="none"><rect width="19" height="27" fill="#2b2e31"/><path d="M6 2 L11 16 L16 20 L6 18 L2 24 L4 12Z" fill="#c9cdd0"/><rect y="22" width="19" height="5" fill="#1b1d1f"/></svg>
<div class="t" style="left:278px;top:425.24px;font-size:8.1px;line-height:9.72px;color:#858585;">Oblivion</div>
<div class="t" style="left:278.5px;top:436.56px;font-size:4.9px;line-height:5.88px;color:#bababa;">2h 4min | Action, SF</div>
<div class="a" style="left:248px;top:453.0px;width:170px;height:0.5px;background:#f1f2f3"></div>
<svg style="left:252px;top:458.3px" width="19" height="27" viewBox="0 0 19 27" preserveAspectRatio="none"><rect width="19" height="27" fill="#24425e"/><rect x="0" y="0" width="19" height="2" fill="#4a6a88"/><rect x="5" y="4" width="9" height="4" fill="#8fb0cc"/><path d="M3 14 Q9.5 8 16 14 L16 20 L3 20Z" fill="#a8c0d4"/><rect y="20" width="19" height="7" fill="#1a2e42"/></svg>
<div class="t" style="left:278px;top:463.24px;font-size:8.1px;line-height:9.72px;color:#858585;">Joy</div>
</div></div>
<div class="a" style="left:421px;top:208px;width:75px;height:100px;overflow:hidden">
<div class="a" style="left:-421px;top:-208px;width:1000px;height:592px">
<svg style="left:393px;top:208.5px" width="67" height="98" viewBox="0 0 66 98" preserveAspectRatio="none"><defs><filter id="mb" x="-10%" y="-10%" width="120%" height="120%"><feGaussianBlur stdDeviation="1.6"/></filter><filter id="mb2" x="-10%" y="-10%" width="120%" height="120%"><feGaussianBlur stdDeviation="0.7"/></filter></defs><rect width="66" height="98" fill="#857b77"/><g filter="url(#mb)"><g fill="#6c615d" opacity="0.7"><path d="M0 6 Q10 18 6 38 Q3 52 12 68 L4 72 Q-4 50 0 28Z"/><path d="M26 44 Q42 36 62 22 L64 30 Q46 44 30 50Z"/><path d="M36 64 Q48 72 54 90 L46 92 Q40 78 32 70Z"/></g><g fill="#a0968f" opacity="0.6"><ellipse cx="46" cy="14" rx="13" ry="9"/><ellipse cx="22" cy="30" rx="10" ry="8"/><ellipse cx="30" cy="82" rx="14" ry="8"/><ellipse cx="56" cy="56" rx="8" ry="10"/></g><ellipse cx="15" cy="90" rx="3" ry="6" fill="#74869a" opacity="0.7"/></g><g filter="url(#mb2)" stroke="#5e5450" stroke-width="1" fill="none" opacity="0.7"><path d="M4 20 Q8 30 5 44"/><path d="M30 46 Q44 38 58 28"/><path d="M10 74 Q20 66 24 58"/></g><text x="33" y="54.5" text-anchor="middle" font-family="Liberation Sans" font-size="3.8" letter-spacing="1.3" fill="#fafafa" font-weight="bold">MARTIAN</text><path d="M50 59 L57 68" stroke="#2a2424" stroke-width="1.4"/><rect x="0.3" y="0.3" width="65.4" height="97.4" fill="none" stroke="#3a3434" stroke-width="0.6"/></svg>
<div class="a" style="left:421px;top:208.5px;width:0.8px;height:98px;background:rgba(40,30,30,.45)"></div>
<svg style="left:462px;top:208.5px" width="66" height="98" viewBox="0 0 66 98" preserveAspectRatio="none"><defs><linearGradient id="ibg" x1="0" y1="0" x2="0" y2="1"><stop offset="0" stop-color="#cdd4d6"/><stop offset="0.55" stop-color="#b7c1c3"/><stop offset="0.72" stop-color="#667273"/><stop offset="1" stop-color="#3a4446"/></linearGradient><filter id="ib" x="-10%" y="-10%" width="120%" height="120%"><feGaussianBlur stdDeviation="1.5"/></filter></defs><rect width="66" height="98" fill="url(#ibg)"/><g filter="url(#ib)"><g fill="#e4e9ea" opacity="0.85"><ellipse cx="15" cy="22" rx="14" ry="7"/><ellipse cx="22" cy="48" rx="16" ry="6"/></g><g fill="#8d989b" opacity="0.6"><ellipse cx="20" cy="36" rx="12" ry="3"/><ellipse cx="12" cy="60" rx="12" ry="4"/></g></g><path d="M30 14 L33 12 L34 20 L33 36 L31 38 L30 26Z" fill="#2a2f30"/><g fill="#eee"><rect x="8" y="76" width="1.5" height="1.5"/><rect x="12" y="76" width="1.5" height="1.5"/><rect x="16" y="76" width="1.5" height="1.5"/><rect x="20" y="76" width="1.5" height="1.5"/><rect x="24" y="76" width="8" height="1.5"/></g><rect x="0.3" y="0.3" width="65.4" height="97.4" fill="none" stroke="#2e3434" stroke-width="0.7"/></svg>
</div></div>
<svg style="left:240px;top:250px" width="6" height="9" viewBox="0 0 6 9"><path d="M0.5 0.5 L0.5 7.5 L2.3 5.8 L3.6 8.5 L4.6 8 L3.4 5.3 L5.8 5.3Z" fill="#222" stroke="#ddd" stroke-width="0.5"/></svg>
<div class="a" style="left:231px;top:195px;width:178.5px;height:0.7px;background:#b0b5bd"></div>
<div class="a" style="left:230.8px;top:195px;width:0.9px;height:210px;background:#565c62"></div>
<div class="a" style="left:231px;top:405px;width:178.5px;height:0.8px;background:#b0b5bd"></div>
<div class="a" style="left:409px;top:195px;width:0.7px;height:210.8px;background:#b6bac2"></div>
<div class="a" style="left:319.8px;top:195px;width:0.6px;height:210px;background:rgba(154,160,180,.75)"></div>
<div class="a" style="left:231px;top:237.4px;width:11px;height:0.8px;background:#4e5359"></div>
<div class="a" style="left:231px;top:195px;width:11px;height:0.8px;background:#62676e"></div>
<svg style="left:228.3px;top:192.4px" width="5.5" height="5.5" viewBox="0 0 7 7"><path d="M3.5 0 L7 3.5 L3.5 7 L0 3.5Z" fill="#b4b8c0"/></svg>
<div class="a" style="left:318.7px;top:193.9px;width:3px;height:3px;border-radius:50%;background:#a0a6ba"></div>
<div class="a" style="left:407.9px;top:193.9px;width:3px;height:3px;border-radius:50%;background:#a0a6ba"></div>
<div class="a" style="left:229.9px;top:298.5px;width:3px;height:3px;border-radius:50%;background:#a0a6ba"></div>
<div class="a" style="left:318.7px;top:403.9px;width:3px;height:3px;border-radius:50%;background:#a0a6ba"></div>
<div class="a" style="left:407.9px;top:403.9px;width:3px;height:3px;border-radius:50%;background:#a0a6ba"></div>
<div class="a" style="left:496px;top:102px;width:166px;height:439px;background:#474747"></div>
<div class="a" style="left:573px;top:108px;width:89px;height:14.5px;background:#4b4b4b"></div>
<div class="t" style="left:577.0px;top:113.24px;font-size:4.6px;line-height:5.52px;color:#c4c4c4;">0</div>
<div class="t" style="left:596.6px;top:113.24px;font-size:4.6px;line-height:5.52px;color:#c4c4c4;transform:translateX(-50%);">0.4</div>
<div class="t" style="left:616.2px;top:113.24px;font-size:4.6px;line-height:5.52px;color:#c4c4c4;transform:translateX(-50%);">0.8</div>
<div class="t" style="left:635.8px;top:113.24px;font-size:4.6px;line-height:5.52px;color:#c4c4c4;transform:translateX(-50%);">1.2</div>
<div class="t" style="left:655.4px;top:113.24px;font-size:4.6px;line-height:5.52px;color:#c4c4c4;transform:translateX(-50%);">1.6</div>
<div class="a" style="left:496px;top:108px;width:77px;height:14px;background:#6f6f6f"></div>
<div class="a" style="left:559.5px;top:108px;width:13.5px;height:14px;background:#696969"></div>
<div class="a" style="left:496px;top:122px;width:77px;height:1px;background:#5e5e5e"></div>
<svg style="left:499px;top:111.2px" width="9" height="8" viewBox="0 0 9 8"><path d="M1 1.5 L4.5 4 L8 1.5" fill="none" stroke="#ddd" stroke-width="0.8"/><rect x="0.5" y="5.5" width="8" height="1" fill="#ddd"/></svg>
<div class="t" style="left:510px;top:111.84px;font-size:5.6px;line-height:6.72px;color:#e4e4e4;">Tap</div>
<div class="a" style="left:563px;top:112.2px;width:5.5px;height:5.5px;background:#0a0a0a"></div>
<div class="a" style="left:563px;top:118.0px;width:5.5px;height:0.8px;background:#ddd"></div>
<div class="a" style="left:496px;top:123px;width:77px;height:14px;background:#6f6f6f"></div>
<div class="a" style="left:559.5px;top:123px;width:13.5px;height:14px;background:#696969"></div>
<div class="a" style="left:496px;top:137px;width:77px;height:1px;background:#5e5e5e"></div>
<div class="a" style="left:503px;top:123px;width:0.6px;height:15px;background:#7c7c7c"></div>
<svg style="left:510.5px;top:126.19999999999999px" width="8" height="8" viewBox="0 0 8 8"><g fill="#f0f0f0"><rect x="0" y="0" width="2" height="2"/><rect x="4" y="0" width="2" height="2"/><rect x="2" y="2" width="2" height="2"/><rect x="6" y="2" width="2" height="2"/><rect x="0" y="4" width="2" height="2"/><rect x="4" y="4" width="2" height="2"/><rect x="2" y="6" width="2" height="2"/><rect x="6" y="6" width="2" height="2"/></g><g fill="#ccc" opacity=".6"><rect x="2" y="0" width="2" height="2"/><rect x="6" y="0" width="2" height="2"/><rect x="0" y="2" width="2" height="2"/><rect x="4" y="2" width="2" height="2"/><rect x="2" y="4" width="2" height="2"/><rect x="6" y="4" width="2" height="2"/><rect x="0" y="6" width="2" height="2"/><rect x="4" y="6" width="2" height="2"/></g></svg>
<div class="t" style="left:522.5px;top:126.84px;font-size:5.6px;line-height:6.72px;color:#e4e4e4;">Opacity</div>
<div class="a" style="left:563px;top:127.19999999999999px;width:5.5px;height:5.5px;background:#fafafa"></div>
<div class="a" style="left:496px;top:138px;width:77px;height:13px;background:#6f6f6f"></div>
<div class="a" style="left:559.5px;top:138px;width:13.5px;height:13px;background:#696969"></div>
<div class="a" style="left:496px;top:151px;width:77px;height:1px;background:#5e5e5e"></div>
<div class="a" style="left:503px;top:138px;width:0.6px;height:14px;background:#7c7c7c"></div>
<svg style="left:510.5px;top:140.7px" width="8" height="8" viewBox="0 0 8 8"><g fill="#f0f0f0"><rect x="0" y="0" width="2" height="2"/><rect x="4" y="0" width="2" height="2"/><rect x="2" y="2" width="2" height="2"/><rect x="6" y="2" width="2" height="2"/><rect x="0" y="4" width="2" height="2"/><rect x="4" y="4" width="2" height="2"/><rect x="2" y="6" width="2" height="2"/><rect x="6" y="6" width="2" height="2"/></g><g fill="#ccc" opacity=".6"><rect x="2" y="0" width="2" height="2"/><rect x="6" y="0" width="2" height="2"/><rect x="0" y="2" width="2" height="2"/><rect x="4" y="2" width="2" height="2"/><rect x="2" y="4" width="2" height="2"/><rect x="6" y="4" width="2" height="2"/><rect x="0" y="6" width="2" height="2"/><rect x="4" y="6" width="2" height="2"/></g></svg>
<div class="t" style="left:522.5px;top:141.34px;font-size:5.6px;line-height:6.72px;color:#e4e4e4;">Opacity</div>
<div class="a" style="left:563px;top:141.7px;width:5.5px;height:5.5px;background:#0a0a0a"></div>
<div class="a" style="left:496px;top:152px;width:77px;height:14px;background:#aab8d3"></div>
<div class="a" style="left:559.5px;top:152px;width:13.5px;height:14px;background:#b4c1da"></div>
<div class="a" style="left:496px;top:166px;width:77px;height:1px;background:#5e5e5e"></div>
<div class="a" style="left:503px;top:152px;width:0.6px;height:15px;background:#c5cfe3"></div>
<svg style="left:510.5px;top:155.2px" width="8" height="8" viewBox="0 0 8 8"><path d="M4 0 L4 8 M0 4 L8 4 M3 1 L4 0 L5 1 M3 7 L4 8 L5 7 M1 3 L0 4 L1 5 M7 3 L8 4 L7 5" fill="none" stroke="#eee" stroke-width="0.8"/></svg>
<div class="t" style="left:522.5px;top:155.84px;font-size:5.6px;line-height:6.72px;color:#eef2fa;">Move</div>
<div class="a" style="left:563px;top:156.2px;width:5.5px;height:5.5px;background:#fafafa"></div>
<div class="a" style="left:496px;top:167px;width:77px;height:14px;background:#aab8d3"></div>
<div class="a" style="left:559.5px;top:167px;width:13.5px;height:14px;background:#b4c1da"></div>
<div class="a" style="left:496px;top:181px;width:77px;height:1px;background:#5e5e5e"></div>
<div class="a" style="left:503px;top:167px;width:0.6px;height:15px;background:#c5cfe3"></div>
<svg style="left:510.5px;top:170.2px" width="8" height="8" viewBox="0 0 8 8"><g fill="#f4f6fb"><rect x="0" y="0" width="2" height="2"/><rect x="4" y="0" width="2" height="2"/><rect x="2" y="2" width="2" height="2"/><rect x="6" y="2" width="2" height="2"/><rect x="0" y="4" width="2" height="2"/><rect x="4" y="4" width="2" height="2"/><rect x="2" y="6" width="2" height="2"/><rect x="6" y="6" width="2" height="2"/></g><g fill="#ccc" opacity=".6"><rect x="2" y="0" width="2" height="2"/><rect x="6" y="0" width="2" height="2"/><rect x="0" y="2" width="2" height="2"/><rect x="4" y="2" width="2" height="2"/><rect x="2" y="4" width="2" height="2"/><rect x="6" y="4" width="2" height="2"/><rect x="0" y="6" width="2" height="2"/><rect x="4" y="6" width="2" height="2"/></g></svg>
<div class="t" style="left:522.5px;top:170.84px;font-size:5.6px;line-height:6.72px;color:#eef2fa;">Opacity</div>
<div class="a" style="left:563px;top:171.2px;width:5.5px;height:5.5px;background:#fafafa"></div>
<div class="a" style="left:496px;top:182px;width:77px;height:13px;background:#6f6f6f"></div>
<div class="a" style="left:559.5px;top:182px;width:13.5px;height:13px;background:#696969"></div>
<div class="a" style="left:496px;top:195px;width:77px;height:1px;background:#5e5e5e"></div>
<div class="a" style="left:503px;top:182px;width:0.6px;height:14px;background:#7c7c7c"></div>
<svg style="left:510.5px;top:184.7px" width="8" height="8" viewBox="0 0 8 8"><g fill="#f0f0f0"><rect x="0" y="0" width="2" height="2"/><rect x="4" y="0" width="2" height="2"/><rect x="2" y="2" width="2" height="2"/><rect x="6" y="2" width="2" height="2"/><rect x="0" y="4" width="2" height="2"/><rect x="4" y="4" width="2" height="2"/><rect x="2" y="6" width="2" height="2"/><rect x="6" y="6" width="2" height="2"/></g><g fill="#ccc" opacity=".6"><rect x="2" y="0" width="2" height="2"/><rect x="6" y="0" width="2" height="2"/><rect x="0" y="2" width="2" height="2"/><rect x="4" y="2" width="2" height="2"/><rect x="2" y="4" width="2" height="2"/><rect x="6" y="4" width="2" height="2"/><rect x="0" y="6" width="2" height="2"/><rect x="4" y="6" width="2" height="2"/></g></svg>
<div class="t" style="left:522.5px;top:185.34px;font-size:5.6px;line-height:6.72px;color:#e4e4e4;">Opacity</div>
<div class="a" style="left:563px;top:185.7px;width:5.5px;height:5.5px;background:#0a0a0a"></div>
<div class="a" style="left:496px;top:196px;width:77px;height:14px;background:#6f6f6f"></div>
<div class="a" style="left:559.5px;top:196px;width:13.5px;height:14px;background:#696969"></div>
<div class="a" style="left:496px;top:210px;width:77px;height:1px;background:#5e5e5e"></div>
<div class="a" style="left:503px;top:196px;width:0.6px;height:15px;background:#7c7c7c"></div>
<svg style="left:510.5px;top:199.2px" width="8" height="8" viewBox="0 0 8 8"><g fill="#f0f0f0"><rect x="0" y="0" width="2" height="2"/><rect x="4" y="0" width="2" height="2"/><rect x="2" y="2" width="2" height="2"/><rect x="6" y="2" width="2" height="2"/><rect x="0" y="4" width="2" height="2"/><rect x="4" y="4" width="2" height="2"/><rect x="2" y="6" width="2" height="2"/><rect x="6" y="6" width="2" height="2"/></g><g fill="#ccc" opacity=".6"><rect x="2" y="0" width="2" height="2"/><rect x="6" y="0" width="2" height="2"/><rect x="0" y="2" width="2" height="2"/><rect x="4" y="2" width="2" height="2"/><rect x="2" y="4" width="2" height="2"/><rect x="6" y="4" width="2" height="2"/><rect x="0" y="6" width="2" height="2"/><rect x="4" y="6" width="2" height="2"/></g></svg>
<div class="t" style="left:522.5px;top:199.84px;font-size:5.6px;line-height:6.72px;color:#e4e4e4;">Opacity</div>
<div class="a" style="left:563px;top:200.2px;width:5.5px;height:5.5px;background:#0a0a0a"></div>
<div class="a" style="left:496px;top:211px;width:77px;height:14px;background:#6f6f6f"></div>
<div class="a" style="left:559.5px;top:211px;width:13.5px;height:14px;background:#696969"></div>
<div class="a" style="left:496px;top:225px;width:77px;height:1px;background:#5e5e5e"></div>
<div class="a" style="left:503px;top:211px;width:0.6px;height:15px;background:#7c7c7c"></div>
<svg style="left:510.5px;top:214.2px" width="8" height="8" viewBox="0 0 8 8"><path d="M4 0 L4 8 M0 4 L8 4 M3 1 L4 0 L5 1 M3 7 L4 8 L5 7 M1 3 L0 4 L1 5 M7 3 L8 4 L7 5" fill="none" stroke="#eee" stroke-width="0.8"/></svg>
<div class="t" style="left:522.5px;top:214.84px;font-size:5.6px;line-height:6.72px;color:#e4e4e4;">Move</div>
<div class="a" style="left:563px;top:215.2px;width:5.5px;height:5.5px;background:#0a0a0a"></div>
<div class="a" style="left:496px;top:226px;width:77px;height:13px;background:#6f6f6f"></div>
<div class="a" style="left:559.5px;top:226px;width:13.5px;height:13px;background:#696969"></div>
<div class="a" style="left:496px;top:239px;width:77px;height:1px;background:#5e5e5e"></div>
<div class="a" style="left:503px;top:226px;width:0.6px;height:14px;background:#7c7c7c"></div>
<svg style="left:510.5px;top:228.7px" width="8" height="8" viewBox="0 0 8 8"><rect x="0.5" y="0.5" width="7" height="7" fill="none" stroke="#ddd" stroke-width="0.8"/><rect x="0.5" y="3.5" width="4" height="4" fill="#eee"/></svg>
<div class="t" style="left:522.5px;top:229.34px;font-size:5.6px;line-height:6.72px;color:#e4e4e4;">Scale</div>
<div class="a" style="left:563px;top:229.7px;width:5.5px;height:5.5px;background:#0a0a0a"></div>
<div class="a" style="left:496px;top:240px;width:77px;height:14px;background:#6f6f6f"></div>
<div class="a" style="left:559.5px;top:240px;width:13.5px;height:14px;background:#696969"></div>
<div class="a" style="left:496px;top:254px;width:77px;height:1px;background:#5e5e5e"></div>
<div class="a" style="left:503px;top:240px;width:0.6px;height:15px;background:#7c7c7c"></div>
<svg style="left:510.5px;top:243.2px" width="8" height="8" viewBox="0 0 8 8"><path d="M0.5 0 L0.5 8 M7.5 0 L7.5 8 M2 4 L6 4 M4.5 2.5 L6 4 L4.5 5.5" fill="none" stroke="#ddd" stroke-width="0.8"/></svg>
<div class="t" style="left:522.5px;top:243.84px;font-size:5.6px;line-height:6.72px;color:#e4e4e4;">Jump</div>
<div class="a" style="left:496px;top:255px;width:77px;height:9px;background:#6f6f6f"></div>
<div class="a" style="left:503px;top:255px;width:0.6px;height:9px;background:#7c7c7c"></div>
<div class="t" style="left:513.5px;top:256.20px;font-size:5.5px;line-height:6.60px;color:#ddd;-webkit-text-stroke:0.14px #ddd;transform:translateX(-50%);">+</div>
<div class="a" style="left:496.5px;top:268.8px;width:76px;height:14px;background:#6a6a6a"></div>
<div class="t" style="left:534.5px;top:272.44px;font-size:5.6px;line-height:6.72px;color:#e0e0e0;transform:translateX(-50%);">Add Trigger</div>
<div class="a" style="left:577px;top:128px;width:20.5px;height:5px;background:#a3a3a3"></div>
<div class="a" style="left:577px;top:142.8px;width:20.5px;height:5px;background:#a3a3a3"></div>
<div class="a" style="left:587px;top:157.3px;width:30px;height:5px;background:#a3a3a3"></div>
<div class="a" style="left:597px;top:172px;width:30.5px;height:5px;background:#a3a3a3"></div>
<div class="a" style="left:577px;top:187.3px;width:1.2px;height:5px;background:#a3a3a3"></div>
<div class="a" style="left:577px;top:201.6px;width:20.5px;height:5px;background:#a3a3a3"></div>
<div class="a" style="left:577px;top:216.2px;width:20.5px;height:5px;background:#a3a3a3"></div>
<div class="a" style="left:577px;top:230.8px;width:20.5px;height:5px;background:#a3a3a3"></div>
<div class="a" style="left:573px;top:108px;width:1.5px;height:156px;background:#414141"></div>
<div class="a" style="left:626.5px;top:245.5px;width:3px;height:3px;border-radius:50%;background:#ddd"></div>
<div class="a" style="left:662px;top:102px;width:105px;height:439px;background:#474747"></div>
<div class="a" style="left:663px;top:102.5px;width:104px;height:103.5px;background:#3c3c3c"></div>
<div class="t" style="left:668px;top:107.24px;font-size:4.6px;line-height:5.52px;color:#747474;">Position&nbsp;&nbsp;&nbsp;-60, 15</div>
<div class="t" style="left:668px;top:115.74px;font-size:4.6px;line-height:5.52px;color:#747474;">Origin&nbsp;&nbsp;&nbsp;&nbsp;&nbsp;&nbsp;0, 0</div>
<svg style="left:754.5px;top:110px" width="7" height="7" viewBox="0 0 8 8"><circle cx="4" cy="4" r="3.8" fill="#6a6a6a"/><circle cx="4" cy="4" r="1.5" fill="#888"/></svg>
<div class="a" style="left:690.5px;top:132.5px;width:52.5px;height:60.5px;background:#393434;border:0.7px solid #857c7c"></div>
<div class="a" style="left:739px;top:133.5px;width:0.6px;height:58px;background:#857c7c"></div>
<div class="a" style="left:691.5px;top:190px;width:48px;height:0.6px;background:#857c7c"></div>
<svg style="left:687.5px;top:128.5px" width="7" height="7" viewBox="0 0 7 7"><path d="M3.5 0.3 L6.7 3.5 L3.5 6.7 L0.3 3.5Z" fill="#e8e8e8"/></svg>
<div class="t" style="left:716px;top:193.98px;font-size:4.2px;line-height:5.04px;color:#777;transform:translateX(-50%);">Width</div>
<div class="a" style="left:746px;top:155px;width:1.2px;height:12px;background:#777;border-radius:1px"></div>
<div class="a" style="left:691.5px;top:215px;width:6px;height:6px;background:#f0f0f0;border-radius:1px"></div>
<div class="t" style="left:702px;top:213.74px;font-size:7.1px;line-height:8.52px;color:#e0e0e0;">info_gravity</div>
<div class="t" style="left:667px;top:237.68px;font-size:5.2px;line-height:6.24px;color:#cfcfcf;">Position</div>
<div class="a" style="left:695px;top:234.6px;width:33px;height:12px;background:#3a3a3a;border-radius:1px"></div>
<div class="t" style="left:697px;top:237.36px;font-size:5.4px;line-height:6.48px;color:#e6e6e6;">-60</div>
<div class="t" style="left:711.5px;top:248.70px;font-size:4.0px;line-height:4.80px;color:#8a8a8a;transform:translateX(-50%);">X</div>
<div class="a" style="left:730.5px;top:234.6px;width:32.5px;height:12px;background:#3a3a3a;border-radius:1px"></div>
<div class="t" style="left:732.5px;top:237.36px;font-size:5.4px;line-height:6.48px;color:#e6e6e6;">15</div>
<div class="t" style="left:747px;top:248.70px;font-size:4.0px;line-height:4.80px;color:#8a8a8a;transform:translateX(-50%);">Y</div>
<div class="t" style="left:667px;top:266.38px;font-size:5.2px;line-height:6.24px;color:#cfcfcf;">Size</div>
<div class="a" style="left:695px;top:263.8px;width:29.5px;height:11.5px;background:#3a3a3a;border-radius:1px"></div>
<div class="t" style="left:697px;top:266.31px;font-size:5.4px;line-height:6.48px;color:#e6e6e6;">375</div>
<div class="t" style="left:710px;top:277.40px;font-size:4.0px;line-height:4.80px;color:#8a8a8a;transform:translateX(-50%);">Width</div>
<svg style="left:726px;top:266.5px" width="4" height="6" viewBox="0 0 4 6"><rect x="0" y="2.5" width="4" height="3.5" fill="#ddd"/><path d="M1 2.5 L1 1.3 Q2 0 3 1.3 L3 2.5" fill="none" stroke="#ddd" stroke-width="0.6"/></svg>
<div class="a" style="left:731px;top:263.8px;width:32px;height:11.5px;background:#3a3a3a;border-radius:1px"></div>
<div class="t" style="left:733px;top:266.31px;font-size:5.4px;line-height:6.48px;color:#e6e6e6;">442</div>
<div class="t" style="left:748px;top:277.40px;font-size:4.0px;line-height:4.80px;color:#8a8a8a;transform:translateX(-50%);">Height</div>
<div class="t" style="left:667px;top:294.68px;font-size:5.2px;line-height:6.24px;color:#cfcfcf;">Rotation</div>
<svg style="left:694px;top:291.5px" width="13" height="13" viewBox="0 0 13 13"><circle cx="6.5" cy="6.5" r="6" fill="#2e2e2e"/><circle cx="6.5" cy="2" r="0.9" fill="#ddd"/></svg>
<div class="a" style="left:717.5px;top:292px;width:45px;height:12px;background:#3a3a3a;border-radius:1px"></div>
<div class="t" style="left:719.5px;top:294.76px;font-size:5.4px;line-height:6.48px;color:#e6e6e6;">0</div>
<div class="t" style="left:740px;top:306.10px;font-size:4.0px;line-height:4.80px;color:#8a8a8a;transform:translateX(-50%);">Angle</div>
<div class="t" style="left:667px;top:322.88px;font-size:5.2px;line-height:6.24px;color:#cfcfcf;">Origin</div>
<svg style="left:694px;top:320.5px" width="13" height="12" viewBox="0 0 13 12"><g fill="#777"><rect x="5" y="1" width="1.4" height="1.4"/><rect x="10" y="1" width="1.4" height="1.4"/><rect x="1" y="5.5" width="1.4" height="1.4"/><rect x="5" y="5.5" width="1.4" height="1.4"/><rect x="10" y="5.5" width="1.4" height="1.4"/><rect x="1" y="10" width="1.4" height="1.4"/><rect x="5" y="10" width="1.4" height="1.4"/><rect x="10" y="10" width="1.4" height="1.4"/></g><circle cx="1.7" cy="1.7" r="1.6" fill="#8a9cf0"/></svg>
<div class="a" style="left:709.5px;top:320.5px;width:24.5px;height:12px;background:#3a3a3a;border-radius:1px"></div>
<div class="t" style="left:711.5px;top:323.26px;font-size:5.4px;line-height:6.48px;color:#e6e6e6;">0</div>
<div class="t" style="left:722px;top:334.60px;font-size:4.0px;line-height:4.80px;color:#8a8a8a;transform:translateX(-50%);">X</div>
<div class="a" style="left:737px;top:320.5px;width:25.5px;height:12px;background:#3a3a3a;border-radius:1px"></div>
<div class="t" style="left:739px;top:323.26px;font-size:5.4px;line-height:6.48px;color:#e6e6e6;">0</div>
<div class="t" style="left:750px;top:334.60px;font-size:4.0px;line-height:4.80px;color:#8a8a8a;transform:translateX(-50%);">Y</div>
<div class="t" style="left:667px;top:364.18px;font-size:5.2px;line-height:6.24px;color:#cfcfcf;">Opacity</div>
<div class="a" style="left:694.5px;top:366.6px;width:34px;height:1.6px;background:#8d93b8;border-radius:1px"></div>
<div class="a" style="left:724.5px;top:363.5px;width:7px;height:7px;border-radius:50%;background:#f2f2f2"></div>
<div class="a" style="left:736.5px;top:362px;width:25.5px;height:11.5px;background:#3a3a3a;border-radius:1px"></div>
<div class="t" style="left:738.5px;top:364.51px;font-size:5.4px;line-height:6.48px;color:#e6e6e6;">100</div>
<div class="t" style="left:667px;top:386.18px;font-size:5.2px;line-height:6.24px;color:#cfcfcf;">Fill Color</div>
<div class="a" style="left:695.5px;top:384px;width:11px;height:11px;background:#f8f8f8;border-radius:1px"></div>
<div class="a" style="left:707.5px;top:383.8px;width:25px;height:12px;background:#3a3a3a;border-radius:1px"></div>
<div class="t" style="left:709.5px;top:386.56px;font-size:5.4px;line-height:6.48px;color:#e6e6e6;">FFFFFF</div>
<div class="t" style="left:720px;top:397.90px;font-size:4.0px;line-height:4.80px;color:#8a8a8a;transform:translateX(-50%);">Hex</div>
<div class="a" style="left:736.5px;top:383.8px;width:26px;height:12px;background:#3a3a3a;border-radius:1px"></div>
<div class="t" style="left:738.5px;top:386.56px;font-size:5.4px;line-height:6.48px;color:#e6e6e6;">0</div>
<div class="t" style="left:750px;top:397.90px;font-size:4.0px;line-height:4.80px;color:#8a8a8a;transform:translateX(-50%);">Alp</div>
<div class="t" style="left:667px;top:428.88px;font-size:5.2px;line-height:6.24px;color:#cfcfcf;">Scroll</div>
<div class="t" style="left:667px;top:436.38px;font-size:5.2px;line-height:6.24px;color:#cfcfcf;">Paging</div>
<div class="a" style="left:694px;top:428.5px;width:69px;height:12.5px;background:#3a3a3a;border-radius:1px"></div>
<div class="a" style="left:694.5px;top:429px;width:23px;height:11.5px;background:#4a90e2;border:0.8px solid #7fb2f0;border-radius:1px"></div>
<div class="t" style="left:706px;top:431.80px;font-size:5.0px;line-height:6.00px;color:#f4f8ff;transform:translateX(-50%);">None</div>
<div class="t" style="left:729px;top:431.80px;font-size:5.0px;line-height:6.00px;color:#999;transform:translateX(-50%);">Scroll</div>
<div class="t" style="left:751.5px;top:431.80px;font-size:5.0px;line-height:6.00px;color:#999;transform:translateX(-50%);">Paging</div>
<div class="t" style="left:667px;top:465.28px;font-size:5.2px;line-height:6.24px;color:#cfcfcf;">Hit area</div>
<div class="a" style="left:755px;top:464.5px;width:7.5px;height:7.5px;background:#3a3a3a"></div>
<div class="a" style="left:663px;top:482px;width:104px;height:0.6px;background:#444"></div>
<div class="a" style="left:667.5px;top:497.5px;width:6px;height:6px;background:#3a3a3a"></div>
<div class="t" style="left:679px;top:497.54px;font-size:5.1px;line-height:6.12px;color:#d8d8d8;">Allow Touch to Affect lower layers</div>
<div class="a" style="left:667.5px;top:509.5px;width:6px;height:6px;background:#3a3a3a"></div>
<div class="t" style="left:679px;top:509.64px;font-size:5.1px;line-height:6.12px;color:#d8d8d8;">Clip Sublayers</div>
<div class="a" style="left:768px;top:55px;width:177px;height:350px;background:#fbfcfd;box-shadow:0 5px 12px rgba(0,0,0,.25),0 0 2px rgba(0,0,0,.15);border-radius:4px 4px 2px 2px"></div>
<div class="a" style="left:768px;top:55px;width:177px;height:10px;background:linear-gradient(#efefef,#e6e6e6);border-radius:4px 4px 0 0"></div>
<div class="a" style="left:770.5px;top:56.8px;width:6.5px;height:6.5px;border-radius:50%;background:#e4e4e4;border:0.5px solid #dadada"></div>
<div class="a" style="left:780.0px;top:56.8px;width:6.5px;height:6.5px;border-radius:50%;background:#e4e4e4;border:0.5px solid #dadada"></div>
<div class="a" style="left:789.5px;top:56.8px;width:6.5px;height:6.5px;border-radius:50%;background:#e4e4e4;border:0.5px solid #dadada"></div>
<div class="t" style="left:856.5px;top:56.64px;font-size:5.6px;line-height:6.72px;color:#b4b4b4;transform:translateX(-50%);">ProtoPie Viewer</div>
<div class="a" style="left:768px;top:65px;width:177px;height:318.5px;overflow:hidden">
<div class="a" style="left:-242.7px;top:-154.4px;width:1000px;height:592px">
<svg style="left:245px;top:157.6px" width="18" height="3.4" viewBox="0 0 18 3.4"><g fill="#1a1a1a"><circle cx="1.6" cy="1.7" r="1.45"/><circle cx="5.2" cy="1.7" r="1.45"/><circle cx="8.8" cy="1.7" r="1.45"/><circle cx="12.4" cy="1.7" r="1.45"/><circle cx="16" cy="1.7" r="1.45"/></g></svg>
<div class="t" style="left:264px;top:156.12px;font-size:5.3px;line-height:6.36px;color:#666;">Sketch</div>
<svg style="left:284.5px;top:157px" width="5.5" height="4.5" viewBox="0 0 6 5"><path d="M0 1.5 Q3 -0.8 6 1.5 L3 5Z" fill="#444"/></svg>
<div class="t" style="left:331.5px;top:155.94px;font-size:5.6px;line-height:6.72px;color:#333;-webkit-text-stroke:0.12px #333;transform:translateX(-50%);">9:41 AM</div>
<div class="t" style="left:406px;top:156.12px;font-size:5.3px;line-height:6.36px;color:#555;transform:translateX(-100%);">100%</div>
<div class="a" style="left:407px;top:157.6px;width:11px;height:3.6px;background:#111;border-radius:1.2px"></div>
<svg style="left:252px;top:175px" width="5" height="4.5" viewBox="0 0 6 5"><g fill="#bbb"><rect y="0" width="6" height="1"/><rect y="2" width="6" height="1"/><rect y="4" width="6" height="1"/></g></svg>
<div class="t" style="left:332.3px;top:173.44px;font-size:6.6px;line-height:7.92px;color:#3a3a3a;transform:translateX(-50%);letter-spacing:1.75px">CINEPHILE</div>
<div class="t" style="left:251.5px;top:195.24px;font-size:5.6px;line-height:6.72px;color:#555;">Recommend</div>
<div class="a" style="left:247px;top:206.5px;width:170px;height:0.5px;background:#f0f0f0"></div>
<svg style="left:252px;top:208.5px" width="66" height="98" viewBox="0 0 66 98" preserveAspectRatio="none"><defs><linearGradient id="spbg" x1="0" y1="0" x2="0" y2="1"><stop offset="0" stop-color="#8d8d8d"/><stop offset="0.5" stop-color="#7d7d7d"/><stop offset="1" stop-color="#747474"/></linearGradient><filter id="sb" x="-5%" y="-5%" width="110%" height="110%"><feGaussianBlur stdDeviation="0.45"/></filter></defs><rect width="66" height="98" fill="url(#spbg)"/><g filter="url(#sb)"><g fill="#a5a5a5" opacity="0.55"><rect x="3" y="3" width="22" height="2.2"/><rect x="38" y="3" width="25" height="2.2"/><rect x="3" y="8.5" width="18" height="2.2"/><rect x="44" y="8.5" width="19" height="2.2"/></g><path d="M4 92 L5 58 Q6 43 14 39 L26 33 L40 33 L52 39 Q60 43 61 58 L62 92 L56 92 L54 62 L52 98 L14 98 L12 62 L10 92Z" fill="#141414"/><path d="M14 56 L11 90 L15 90 L17 62Z M52 56 L55 90 L51 90 L49 62Z" fill="#8a8a8a"/><ellipse cx="8" cy="90" rx="3.2" ry="4.5" fill="#bdb3ab"/><ellipse cx="58" cy="90" rx="3.2" ry="4.5" fill="#bdb3ab"/><path d="M26 26 L40 26 L41 36 L25 36Z" fill="#111"/><ellipse cx="33.5" cy="17" rx="7.5" ry="10.5" fill="#c8bcb2"/><path d="M25.5 14 Q25 5 33.5 5 Q42 5 41.5 14 Q40 9 33.5 9 Q27 9 25.5 14Z" fill="#5e544c"/><g fill="#4a4a4a" opacity="0.8"><rect x="8" y="62" width="50" height="2"/><rect x="14" y="68" width="38" height="2"/><rect x="8" y="74" width="50" height="2"/><rect x="16" y="80" width="34" height="2"/></g></g><text x="34" y="47" text-anchor="middle" font-family="Liberation Sans" font-size="9.5" letter-spacing="1.7" fill="#ededed">SPECTRE</text><text x="35" y="54" text-anchor="middle" font-family="Liberation Sans" font-size="4" fill="#e0e0e0" font-weight="bold">007</text></svg>
<svg style="left:322px;top:208.5px" width="66" height="98" viewBox="0 0 66 98" preserveAspectRatio="none"><defs><radialGradient id="earth" cx="0.5" cy="0.05" r="0.75"><stop offset="0" stop-color="#e3ebf3"/><stop offset="0.35" stop-color="#b9cadb"/><stop offset="0.8" stop-color="#7b98b6"/><stop offset="1" stop-color="#506c8a"/></radialGradient><filter id="gb" x="-5%" y="-5%" width="110%" height="110%"><feGaussianBlur stdDeviation="0.5"/></filter></defs><rect width="66" height="98" fill="#060608"/><ellipse cx="33" cy="123" rx="56" ry="50" fill="url(#earth)" filter="url(#gb)"/><path d="M30 17 L35 19.5 L38 18 L37 21 L40 23 L35 22.5 L33 25 L33 21.5Z" fill="#e8e8e8"/><text x="33.5" y="70.5" text-anchor="middle" font-family="Liberation Sans" font-size="5.2" letter-spacing="2.1" fill="#eeeeee" font-weight="bold">GRAVITY</text><g fill="#9a9a9a"><rect x="16" y="56.5" width="15" height="2.5"/><rect x="36" y="56.5" width="15" height="2.5"/><rect x="28" y="62.5" width="10" height="0.9"/></g><text x="2" y="8" font-family="Liberation Sans" font-size="4.2" fill="#8a8a8a">ller</text><text x="2" y="15" font-family="Liberation Sans" font-size="4.2" fill="#8a8a8a">nding</text><text x="2" y="56" font-family="Liberation Sans" font-size="4.2" fill="#777">leading</text><text x="2" y="63" font-family="Liberation Sans" font-size="4.2" fill="#777">pet</text><text x="2" y="70" font-family="Liberation Sans" font-size="4.2" fill="#777">A</text></svg>
<svg style="left:393px;top:208.5px" width="67" height="98" viewBox="0 0 66 98" preserveAspectRatio="none"><defs><filter id="mb" x="-10%" y="-10%" width="120%" height="120%"><feGaussianBlur stdDeviation="1.6"/></filter><filter id="mb2" x="-10%" y="-10%" width="120%" height="120%"><feGaussianBlur stdDeviation="0.7"/></filter></defs><rect width="66" height="98" fill="#857b77"/><g filter="url(#mb)"><g fill="#6c615d" opacity="0.7"><path d="M0 6 Q10 18 6 38 Q3 52 12 68 L4 72 Q-4 50 0 28Z"/><path d="M26 44 Q42 36 62 22 L64 30 Q46 44 30 50Z"/><path d="M36 64 Q48 72 54 90 L46 92 Q40 78 32 70Z"/></g><g fill="#a0968f" opacity="0.6"><ellipse cx="46" cy="14" rx="13" ry="9"/><ellipse cx="22" cy="30" rx="10" ry="8"/><ellipse cx="30" cy="82" rx="14" ry="8"/><ellipse cx="56" cy="56" rx="8" ry="10"/></g><ellipse cx="15" cy="90" rx="3" ry="6" fill="#74869a" opacity="0.7"/></g><g filter="url(#mb2)" stroke="#5e5450" stroke-width="1" fill="none" opacity="0.7"><path d="M4 20 Q8 30 5 44"/><path d="M30 46 Q44 38 58 28"/><path d="M10 74 Q20 66 24 58"/></g><text x="33" y="54.5" text-anchor="middle" font-family="Liberation Sans" font-size="3.8" letter-spacing="1.3" fill="#fafafa" font-weight="bold">MARTIAN</text><path d="M50 59 L57 68" stroke="#2a2424" stroke-width="1.4"/><rect x="0.3" y="0.3" width="65.4" height="97.4" fill="none" stroke="#3a3434" stroke-width="0.6"/></svg>
<svg style="left:278px;top:153.5px" width="18" height="18" viewBox="0 0 18 18"><circle cx="9" cy="9" r="8.8" fill="#c9c6c4"/><circle cx="9" cy="9" r="7.6" fill="#3a2e28"/><path d="M4 17 Q9 12 14 17Z" fill="#1a1412"/><ellipse cx="9.3" cy="9" rx="3.2" ry="4.3" fill="#cdb8a8"/><path d="M5.5 8 Q5.5 3.5 9.3 3.5 Q13 3.5 12.8 8 L11.5 5.8 Q9 5 7 6.5Z" fill="#2a1e18"/></svg>
<div class="t" style="left:252px;top:325.76px;font-size:5.9px;line-height:7.08px;color:#444;font-weight:bold">My Movies</div>
<div class="a" style="left:248px;top:339px;width:170px;height:0.5px;background:#f0f1f2"></div>
<svg style="left:252px;top:344.3px" width="19" height="27" viewBox="0 0 19 27" preserveAspectRatio="none"><rect width="19" height="27" fill="#c2c9cb"/><rect y="0" width="19" height="3" fill="#9aa3a5"/><ellipse cx="5" cy="13" rx="5" ry="3" fill="#e4e8e9"/><ellipse cx="14" cy="16" rx="5" ry="2" fill="#8f999b"/><rect y="19" width="19" height="8" fill="#2b3132"/><path d="M8 4 L11 4 L12 17 L7 17Z" fill="#eef1f2"/><path d="M9 5 L10 5 L10.5 12 L8.5 12Z" fill="#7a8485"/><rect x="4" y="22" width="11" height="1.2" fill="#ccc"/></svg>
<div class="t" style="left:278px;top:349.24px;font-size:8.1px;line-height:9.72px;color:#858585;">Interstellar</div>
<div class="t" style="left:278.5px;top:360.56px;font-size:4.9px;line-height:5.88px;color:#bababa;">2h 49min | Mistery, SF</div>
<div class="a" style="left:248px;top:377.0px;width:170px;height:0.5px;background:#f1f2f3"></div>
<svg style="left:252px;top:382.3px" width="19" height="27" viewBox="0 0 19 27" preserveAspectRatio="none"><rect width="19" height="27" fill="#ece5cc"/><path d="M0 2 L4 18 L7 10 L9.5 16 L12 10 L15 18 L19 2 L19 27 L0 27Z" fill="#a29c88"/><path d="M7 12 L12 12 L13 22 L6 22Z" fill="#3e3a32"/><rect y="22" width="19" height="5" fill="#5a564a"/><rect x="3" y="24" width="13" height="1.2" fill="#ddd"/></svg>
<div class="t" style="left:278px;top:387.24px;font-size:8.1px;line-height:9.72px;color:#858585;">Fantastic Beasts</div>
<div class="t" style="left:278.5px;top:398.56px;font-size:4.9px;line-height:5.88px;color:#bababa;">2h 13min | Fantasy, Adventure</div>
<div class="a" style="left:248px;top:415.0px;width:170px;height:0.5px;background:#f1f2f3"></div>
<svg style="left:252px;top:420.3px" width="19" height="27" viewBox="0 0 19 27" preserveAspectRatio="none"><rect width="19" height="27" fill="#2b2e31"/><path d="M6 2 L11 16 L16 20 L6 18 L2 24 L4 12Z" fill="#c9cdd0"/><rect y="22" width="19" height="5" fill="#1b1d1f"/></svg>
<div class="t" style="left:278px;top:425.24px;font-size:8.1px;line-height:9.72px;color:#858585;">Oblivion</div>
<div class="t" style="left:278.5px;top:436.56px;font-size:4.9px;line-height:5.88px;color:#bababa;">2h 4min | Action, SF</div>
<div class="a" style="left:248px;top:453.0px;width:170px;height:0.5px;background:#f1f2f3"></div>
<svg style="left:252px;top:458.3px" width="19" height="27" viewBox="0 0 19 27" preserveAspectRatio="none"><rect width="19" height="27" fill="#24425e"/><rect x="0" y="0" width="19" height="2" fill="#4a6a88"/><rect x="5" y="4" width="9" height="4" fill="#8fb0cc"/><path d="M3 14 Q9.5 8 16 14 L16 20 L3 20Z" fill="#a8c0d4"/><rect y="20" width="19" height="7" fill="#1a2e42"/></svg>
<div class="t" style="left:278px;top:463.24px;font-size:8.1px;line-height:9.72px;color:#858585;">Joy</div>
</div></div>
<div class="a" style="left:768px;top:383.5px;width:177px;height:21.5px;background:#434343;border-top:1px solid #333;border-radius:0 0 2px 2px"></div>
<div class="a" style="left:776px;top:390.5px;width:6.5px;height:6.5px;background:#333;border:0.5px solid #2a2a2a"></div>
<div class="t" style="left:785px;top:390.82px;font-size:5.3px;line-height:6.36px;color:#dcdcdc;">Always on Top</div>
<svg style="left:930.5px;top:390px" width="8" height="8" viewBox="0 0 8 8"><path d="M6.6 4 A2.6 2.6 0 1 1 4 1.4" fill="none" stroke="#ddd" stroke-width="1.1"/><path d="M3.6 0 L5.8 1.4 L3.6 2.8Z" fill="#ddd"/></svg>
</body></html>
